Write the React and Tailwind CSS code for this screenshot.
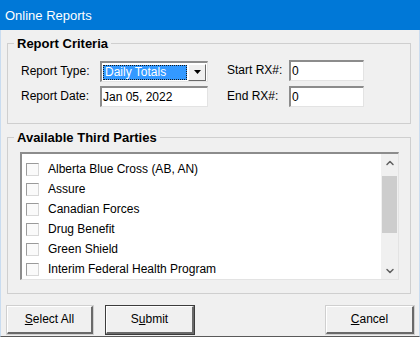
import { ChevronUp, ChevronDown } from 'lucide-react';

const parties = [
  'Alberta Blue Cross (AB, AN)',
  'Assure',
  'Canadian Forces',
  'Drug Benefit',
  'Green Shield',
  'Interim Federal Health Program',
];

const sunken =
  'bg-white border-t-2 border-l-2 border-b border-r border-t-[#8c8c8c] border-l-[#8c8c8c] border-b-[#e3e3e3] border-r-[#e3e3e3]';

const TextBox = ({ value, className = '' }) => (
  <div className={`h-[21px] flex items-center pl-[1px] ${sunken} ${className}`}>{value}</div>
);

const Button = ({ children, isDefault = false, className = '' }) => (
  <button
    type="button"
    className={`h-[28px] flex items-center justify-center bg-[#f0f0f0] text-black border-t border-l border-t-white border-l-white border-b-2 border-r-2 border-b-[#696969] border-r-[#696969] ${
      isDefault ? 'outline outline-1 outline-[#3c3c3c]' : 'shadow-[0_0_0_1px_#cfcfcf]'
    } ${className}`}
  >
    {children}
  </button>
);

export default function App() {
  return (
    <div
      className="w-[420px] h-[337px] flex flex-col bg-[#f0f0f0] text-[12px] text-black leading-[15px]"
      style={{ fontFamily: '"Liberation Sans", Arial, sans-serif' }}
    >
      {/* Title bar */}
      <div className="h-[30px] shrink-0 bg-[#0078d7] text-white text-[13px] flex items-center pl-[5px]">
        Online Reports
      </div>

      <div className="flex-1 flex flex-col border-x border-b border-x-[#c9dcf0] border-b-[#5a5a5a]">
        {/* Report Criteria */}
        <fieldset className="mt-[6px] ml-[6px] w-[404px] h-[88px] border border-[#cfcfcf]">
          <legend className="ml-[6px] px-[3px] font-bold text-[13px]">Report Criteria</legend>
          <div className="flex pl-[13px] pt-[10px]">
            <div className="grid grid-cols-[79px_108px] gap-y-[4px] items-center">
              <span>Report Type:</span>
              <div className={`h-[21px] flex items-center pl-[1px] pr-[1px] ${sunken}`}>
                <div className="flex-1 h-[15px] bg-[#3399ff] text-white border border-dotted border-[#1a1a1a] leading-[13px] pl-[1px]">
                  Daily Totals
                </div>
                <div className="ml-[1px] w-[18px] h-[17px] flex items-center justify-center bg-[#f0f0f0] border-t border-l border-t-white border-l-white border-b border-r border-b-[#696969] border-r-[#696969]">
                  <svg width="7" height="4" viewBox="0 0 7 4">
                    <path d="M0 0h7L3.5 4z" fill="#000" />
                  </svg>
                </div>
              </div>
              <span>Report Date:</span>
              <TextBox value="Jan 05, 2022" />
            </div>
            <div className="ml-[19px] -mt-[1px] grid grid-cols-[62px_75px] gap-y-[5px] items-center">
              <span>Start RX#:</span>
              <TextBox value="0" />
              <span>End RX#:</span>
              <TextBox value="0" />
            </div>
          </div>
        </fieldset>

        {/* Available Third Parties */}
        <fieldset className="mt-[6px] ml-[6px] w-[404px] h-[164px] border border-[#cfcfcf]">
          <legend className="ml-[6px] px-[3px] font-bold text-[13px]">Available Third Parties</legend>
          <div className="ml-[12px] mt-[7px] w-[379px] h-[128px] flex bg-white border-t-2 border-l-2 border-b border-r border-t-[#8c8c8c] border-l-[#8c8c8c] border-b-[#e3e3e3] border-r-[#e3e3e3]">
            <div className="flex-1 pt-[5px] overflow-hidden">
              {parties.map((p) => (
                <div key={p} className="h-[20px] flex items-center pl-[4px]">
                  <span className="w-[13px] h-[13px] shrink-0 bg-[#fafafa] border-t border-l border-b border-r border-t-[#9a9a9a] border-l-[#9a9a9a] border-b-[#d8d8d8] border-r-[#d8d8d8]" />
                  <span className="ml-[9px] whitespace-nowrap">{p}</span>
                </div>
              ))}
            </div>
            <div className="w-[17px] bg-[#f0f0f0] flex flex-col items-center">
              <div className="h-[17px] w-full flex items-center justify-center">
                <ChevronUp size={12} strokeWidth={3} color="#606060" />
              </div>
              <div className="mt-[5px] w-[15px] h-[57px] bg-[#cdcdcd]" />
              <div className="flex-1" />
              <div className="h-[17px] w-full flex items-center justify-center">
                <ChevronDown size={12} strokeWidth={3} color="#606060" />
              </div>
            </div>
          </div>
        </fieldset>

        {/* Buttons */}
        <div className="mt-[12px] flex pl-[6px]">
          <Button className="w-[86px]">
            <span><span className="underline">S</span>elect All</span>
          </Button>
          <Button isDefault className="ml-[13px] w-[88px]">
            <span>S<span className="underline">u</span>bmit</span>
          </Button>
          <Button className="ml-[132px] w-[88px]">
            <span><span className="underline">C</span>ancel</span>
          </Button>
        </div>
      </div>
    </div>
  );
}
